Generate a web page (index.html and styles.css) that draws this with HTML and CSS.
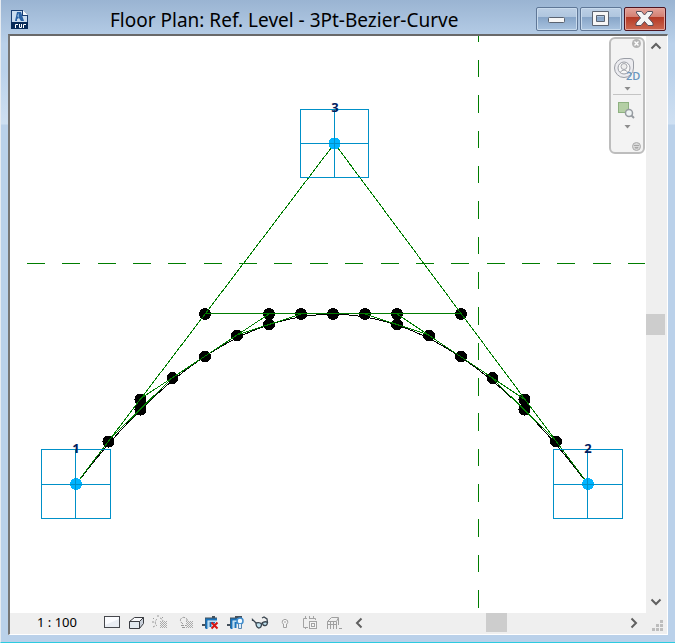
FILE: index.html
```html
<!DOCTYPE html>
<html lang="en">
<head>
<meta charset="utf-8">
<meta name="viewport" content="width=device-width, initial-scale=1">
<title>Floor Plan: Ref. Level - 3Pt-Bezier-Curve</title>
<link rel="stylesheet" href="styles.css">
</head>
<body>
<div class="window">
  <header class="titlebar">
    <svg class="app-icon" width="17" height="19" viewBox="0 0 17 19" aria-hidden="true">
      <path d="M0 0H12L17 5V19H0Z" fill="#173d73"/>
      <path d="M1 1H11V6H16V12H1Z" fill="#c9dcf0"/>
      <path d="M12 0L17 5H12Z" fill="#f5f9fd"/>
      <path d="M4 11L6 2H10L13 11H10L8 8L6 9L6 11Z" fill="#2a62a5"/>
      <path d="M6 6L8 3V8Z" fill="#7da9d6"/>
      <path d="M0 12H17V19H0Z" fill="#062a58"/>
      <path d="M4.500 18V14.500H7M8.500 14V17.500H10.500V14M12.500 18V14.500H15" fill="none" stroke="#fff"/>
    </svg>
    <h1 class="title">Floor Plan: Ref. Level - 3Pt-Bezier-Curve</h1>
    <div class="controls">
      <button class="control" aria-label="Minimize">
        <svg width="40" height="22" viewBox="0 0 40 22"><rect x="11.500" y="9.500" width="16" height="5" rx="1" fill="#f6f6f6" stroke="#5a6371"/></svg>
      </button>
      <button class="control" aria-label="Maximize">
        <svg width="40" height="22" viewBox="0 0 40 22"><path d="M11.500 3.500H27.500V17.500H11.500ZM15.500 7.500V13.500H23.500V7.500Z" fill="#f6f6f6" fill-rule="evenodd" stroke="#5a6371"/></svg>
      </button>
      <button class="control control-close" aria-label="Close">
        <svg width="40" height="22" viewBox="0 0 40 22"><path d="M11.500 3.500H16.500L19.500 7L22.500 3.500H27.500V5L23.500 10L28 15V17.500H23L19.500 13.500L16 17.500H11V15L15.500 10L11.500 5Z" fill="#f4f4f4" stroke="#554e5b" stroke-linejoin="round"/></svg>
      </button>
    </div>
  </header>

  <main class="client">
    <div class="view">
      <svg class="drawing" viewBox="10 36 636 577" role="img" aria-label="Three point Bezier curve construction">
        <g class="curve">
          <path d="M76 484.500Q333 144 588 484.500"/>
        </g>
        <g class="dots">
          <circle cx="108.500" cy="441.500" r="6"/><circle cx="140.500" cy="399.500" r="6"/><circle cx="140.500" cy="409.500" r="6"/>
          <circle cx="172.500" cy="378" r="6"/><circle cx="205" cy="356.500" r="6"/><circle cx="205" cy="314" r="6"/>
          <circle cx="237" cy="335.500" r="6"/><circle cx="269" cy="314" r="6"/><circle cx="269" cy="324.500" r="6"/>
          <circle cx="301" cy="314" r="6"/><circle cx="333" cy="314" r="6"/><circle cx="365" cy="314" r="6"/>
          <circle cx="397" cy="314" r="6"/><circle cx="397" cy="324.500" r="6"/><circle cx="429" cy="335.500" r="6"/>
          <circle cx="461" cy="314" r="6"/><circle cx="461" cy="356.500" r="6"/><circle cx="492.500" cy="378" r="6"/>
          <circle cx="524.500" cy="399.500" r="6"/><circle cx="524.500" cy="409.500" r="6"/><circle cx="556" cy="441.500" r="6"/>
        </g>
        <g class="guides">
          <path d="M76 484L334.500 143.500L588 484M205 313.500H461"/>
          <path d="M140 399L269 314M397 314L524 399"/>
          <path d="M237 335L301 314M365 314L429 335M108 441L172 378M492 378L556 441"/>
        </g>
        <g class="datum">
          <path d="M27 263.500H645" stroke-dasharray="18 17.350"/>
          <path d="M478.500 24.500V609" stroke-dasharray="17.500 17.850"/>
        </g>
        <g class="handles">
          <circle cx="76" cy="484" r="6"/><circle cx="334.500" cy="143.500" r="6"/><circle cx="588" cy="484" r="6"/>
          <path d="M41.500 449.500H110.500V518.500H41.500ZM41.500 484.500H110.500M75.500 449.500V518.500"/>
          <path d="M300.500 109.500H368.500V177.500H300.500ZM300.500 143.500H368.500M334.500 109.500V177.500"/>
          <path d="M553.500 449.500H622.500V518.500H553.500ZM553.500 484.500H622.500M587.500 449.500V518.500"/>
        </g>
        <g class="labels">
          <text x="76" y="453">1</text><text x="335" y="112">3</text><text x="588" y="453">2</text>
        </g>
      </svg>
      <nav class="navbar" aria-label="Navigation">
        <button class="nav-small" aria-label="Close navigation bar">
          <svg width="9" height="9" viewBox="0 0 9 9"><circle cx="4.500" cy="4.500" r="4.500" fill="#b5b5b5"/><path d="M2.500 2.500L6.500 6.500M6.500 2.500L2.500 6.500" stroke="#fff" stroke-width="1.400"/></svg>
        </button>
        <button class="nav-tool" aria-label="Steering wheel 2D">
          <svg width="31" height="30" viewBox="0 0 31 30">
            <path d="M13 4.500H19Q22.500 4.500 22.500 8V14A9.500 9.500 0 1 1 13 4.500Z" fill="#ececf0" stroke="#9a9da5"/>
            <circle cx="13" cy="14" r="6" fill="#f8f8f8" stroke="#9a9da5"/>
            <circle cx="13" cy="12.500" r="3" fill="#eee" stroke="#a5a7ad"/><path d="M9 18.500Q13 13.500 17 18.500" fill="none" stroke="#a5a7ad"/>
            <text class="nav-2d" x="15" y="26">2D</text>
          </svg>
        </button>
        <button class="nav-more" aria-label="Steering wheel options"><svg width="7" height="4" viewBox="0 0 7 4"><path d="M0.500 0H6.500L3.500 3.500Z" fill="#8d8d8d"/></svg></button>
        <button class="nav-tool nav-zoom" aria-label="Zoom region">
          <svg width="31" height="24" viewBox="0 0 31 24">
            <rect x="7.500" y="4.500" width="10" height="10" fill="#b4cfa5" stroke="#8eb181"/>
            <path d="M20 17L23 20" stroke="#969ba0" stroke-width="2"/><circle cx="18" cy="15" r="3.500" fill="#eef3f4" stroke="#969ba0" stroke-width="1.500"/>
          </svg>
        </button>
        <button class="nav-more" aria-label="Zoom options"><svg width="7" height="4" viewBox="0 0 7 4"><path d="M0.500 0H6.500L3.500 3.500Z" fill="#8d8d8d"/></svg></button>
        <button class="nav-small nav-bottom" aria-label="Customize">
          <svg width="9" height="9" viewBox="0 0 9 9"><circle cx="4.500" cy="4.500" r="4" fill="#d9d9d9" stroke="#aaa"/><path d="M2 3.500H7M3 5.500H6L4.500 7Z" fill="#fff" stroke="#999" stroke-width=".8"/></svg>
        </button>
      </nav>
    </div>

    <div class="scroll scroll-y">
      <button class="arrow" aria-label="Scroll up"><svg width="12" height="8" viewBox="0 0 12 8"><path d="M1.500 6.500L6 2L10.500 6.500"/></svg></button>
      <span class="thumb"></span>
      <button class="arrow" aria-label="Scroll down"><svg width="12" height="8" viewBox="0 0 12 8"><path d="M1.500 1.500L6 6L10.500 1.500"/></svg></button>
    </div>

    <footer class="status">
      <button class="scale">1 : 100</button>
      <div class="tools">
        <button class="tool" aria-label="Detail level"><svg width="25" height="20" viewBox="0 0 25 20"><rect x="5.500" y="2.500" width="15" height="11" fill="#e9edf3" stroke="#46484d"/><path d="M6 3H20V5L6 11Z" fill="#fbfcff"/></svg></button>
        <button class="tool" aria-label="Visual style"><svg width="25" height="20" viewBox="0 0 25 20"><g fill="#f8f9fb" stroke="#3b3d42"><path d="M5.500 7.500L10.500 3.500H19.500L15.500 7.500Z"/><path d="M15.500 7.500L19.500 3.500V9.500L15.500 14.500Z" fill="#c9d0da"/><path d="M5.500 7.500H15.500V14.500H5.500Z" fill="#e2e9ef"/></g></svg></button>
        <button class="tool" aria-label="Sun path"><svg width="25" height="20" viewBox="0 0 25 20"><path d="M8 5A4.500 4.500 0 0 0 8 12M11 4A4.500 4.500 0 0 1 14 7M9 1V3M4 4L5 5M3 8H5M4 13L6 12M14 3L13 4" fill="none" stroke="#999" stroke-dasharray="2 1"/><path d="M11 7L18 14M13 7L18 12M11 9L16 14M18 7L11 14M16 7L11 12M18 9L13 14" stroke="#aaa"/></svg></button>
        <button class="tool" aria-label="Shadows"><svg width="25" height="20" viewBox="0 0 25 20"><path d="M9 10Q6 8 6.500 5.500Q9 1.500 13 5L13 7M7 11.500H12M8 13.500H12" fill="none" stroke="#999" stroke-dasharray="3 1"/><path d="M12 7L19 14M14 7L19 12M12 9L17 14M19 7L12 14M17 7L12 12M19 9L14 14" stroke="#aaa"/></svg></button>
        <button class="tool" aria-label="Crop view"><svg width="25" height="20" viewBox="0 0 25 20"><path d="M3 11H6M7 14V4.500H18M13 3H16" fill="none" stroke="#44505b" stroke-width="2"/><path d="M7.500 15V5.500H18M11.500 13V8.500H16" fill="none" stroke="#1874bd" stroke-width="2"/><path d="M9.500 14V7.500H17" fill="none" stroke="#b8def5"/><path d="M12.500 8.500L18.500 14.500M18.500 8.500L12.500 14.500" stroke="#d71414" stroke-width="2"/></svg></button>
        <button class="tool" aria-label="Show crop region"><svg width="25" height="20" viewBox="0 0 25 20"><path d="M3 11H6M7 14V4.500H15M11 3H18" fill="none" stroke="#44505b" stroke-width="2"/><path d="M7.500 15V5.500H14M11.500 14V8.500H14" fill="none" stroke="#1874bd" stroke-width="2"/><path d="M9.500 14V7.500H13" fill="none" stroke="#b8def5"/><circle cx="16" cy="7" r="3" fill="#f2faff" stroke="#3f8ccc" stroke-width="1.500"/><path d="M14.500 10V14.500H17.500V10" fill="#dcefff" stroke="#5887b0"/></svg></button>
        <button class="tool" aria-label="Temporary hide or isolate"><svg width="25" height="20" viewBox="0 0 25 20"><g fill="#bfe1ee" stroke="#3b4650" stroke-width="1.300"><path d="M7 9Q11 8 12.500 10Q12.500 14 9.500 14Q7 13 7 9Z"/><path d="M13.500 8.500Q17 7 18.500 8.500Q18 12 15.500 11.500Q13.500 11.500 13.500 8.500Z"/><path d="M7 9L3.500 5.500V7M12.500 9.500L13.500 9M18.500 8.500L18 5L15 3L13 4" fill="none"/></g></svg></button>
        <button class="tool" aria-label="Reveal hidden elements"><svg width="25" height="20" viewBox="0 0 25 20"><path d="M9.500 10.500Q7.500 8.500 8.500 6.500Q11 4 13.500 6.500Q14.500 8.500 12.500 10.500M9.500 10V13.500H12.500V10M10 8H12" fill="#f5f5f5" stroke="#a0a0a0"/></svg></button>
        <button class="tool" aria-label="Temporary view properties"><svg width="25" height="20" viewBox="0 0 25 20"><g fill="none" stroke="#a3a3a3"><path d="M8 4.500H4.500V13.500H9M10 4.500H16.500V6M6.500 2V4M10.500 2V4M14.500 2V4M6.500 14V15"/><rect x="10.500" y="7.500" width="7" height="7" fill="#f5f5f5"/><rect x="12.500" y="9.500" width="3" height="3"/></g></svg></button>
        <button class="tool" aria-label="Analytical model"><svg width="25" height="20" viewBox="0 0 25 20"><path d="M3.500 15V7.500L7.500 3.500H14.500L12.500 7.500H3.500M6.500 8V15M9.500 8V15M3 10.500H13M12.500 8V15M14.500 4V11M15 14.500H18" fill="none" stroke="#a0a0a0"/></svg></button>
      </div>
      <div class="scroll scroll-x">
        <button class="arrow" aria-label="Scroll left"><svg width="8" height="12" viewBox="0 0 8 12"><path d="M6.500 1.500L2 6L6.500 10.500"/></svg></button>
        <span class="thumb"></span>
        <button class="arrow" aria-label="Scroll right"><svg width="8" height="12" viewBox="0 0 8 12"><path d="M1.500 1.500L6 6L1.500 10.500"/></svg></button>
      </div>
      <svg class="grip" width="21" height="21" viewBox="0 0 21 21" aria-hidden="true"><path d="M14 7h3v3h-3zM10 11h3v3h-3zM14 11h3v3h-3zM6 15h3v3h-3zM10 15h3v3h-3zM14 15h3v3h-3z" fill="#bdbdbd"/></svg>
    </footer>
  </main>
</div>
</body>
</html>
```

FILE: styles.css
```css
* { box-sizing: border-box; }

body { margin: 0; }

button {
  padding: 0;
  border: 0;
  background: none;
  color: inherit;
  font: inherit;
}

svg { display: block; }

.window {
  display: grid;
  grid-template-rows: 34px 1fr;
  min-height: 100vh;
  padding: 0 7px 7px;
  border-left: 1px solid #e6ebf1;
  border-bottom: 1px solid #2ccbe0;
  background: linear-gradient(#9ab4d2, #bad1ea 44px, #bad1ea 70px, #cfe0f2 124px, #bad1ea 125px);
  font-family: "Noto Sans", sans-serif;
}

.titlebar {
  display: flex;
  align-items: flex-start;
  padding: 7px 2px 0 3px;
}

.app-icon {
  flex: none;
  margin-top: 3px;
}

.title {
  flex: 1;
  margin: 0 0 0 82px;
  overflow: hidden;
  color: #000;
  font: 400 19px/26px "Noto Sans", sans-serif;
  white-space: nowrap;
}

.controls {
  display: flex;
  gap: 2px;
}

.control {
  width: 42px;
  height: 24px;
  border: 1px solid #5f7797;
  border-radius: 2px;
  background: linear-gradient(#bdd0e6, #aec5de 42%, #87a5c8 43%, #a9c3df);
  box-shadow: inset 0 0 0 1px #c9dbed;
}

.control-close {
  border-color: #4d1420;
  background: linear-gradient(#e3a299, #d37e70 42%, #b43a26 43%, #cc6750);
  box-shadow: inset 0 0 0 1px #e3a79f;
}

.client {
  display: grid;
  grid-template-columns: 1fr 21px;
  grid-template-rows: 1fr 21px;
  border: 1px solid #fff;
  border-top: 2px solid #696969;
  border-left: 2px solid #777;
  background: #efefef;
}

.view {
  position: relative;
  min-width: 0;
  background: #fff;
}

.drawing {
  width: 100%;
  height: 100%;
  shape-rendering: crispEdges;
}

.curve { fill: none; stroke: #000; }
.guides, .datum { fill: none; stroke: #007d00; }
.handles circle { fill: #00b4ff; }
.handles path { fill: none; stroke: #0090c8; }

.labels {
  fill: #002060;
  font: 700 13px "Noto Sans", sans-serif;
  text-anchor: middle;
}

.navbar {
  position: absolute;
  top: 1px;
  right: 1px;
  display: flex;
  flex-direction: column;
  width: 36px;
  height: 117px;
  border: 2px solid #bdbdbd;
  border-radius: 6px;
  background: #f3f3f3;
}

.nav-small { align-self: flex-end; margin-right: 2px; }
.nav-bottom { margin-top: auto; margin-bottom: 1px; }
.nav-tool { padding-top: 6px; }
.nav-more { display: flex; justify-content: center; padding: 3px 0; }
.nav-zoom {
  margin: 0 2px;
  padding-top: 0;
  border-top: 1px solid #c4c4c4;
}
.nav-zoom svg { margin: 3px -2px 0; }
.nav-2d {
  fill: #6795bd;
  font: 600 11px "Open Sans", sans-serif;
}

.scroll { display: grid; }

.scroll-y { grid-template-rows: 21px 1fr 21px 1fr 21px; }
.scroll-y .thumb { grid-row: 3; width: 19px; }
.scroll-y .arrow { width: 19px; height: 19px; }
.scroll-y .arrow:last-child { grid-row: 5; }

.scroll-x {
  flex: 1;
  grid-template-columns: 20px 1fr 21px 1fr 22px;
}
.scroll-x .thumb { grid-column: 3; height: 19px; }
.scroll-x .arrow { width: 20px; height: 19px; }
.scroll-x .arrow:last-child { grid-column: 5; }

.thumb { background: #cdcdcd; }

.arrow {
  display: grid;
  place-items: center;
}
.arrow path {
  fill: none;
  stroke: #606060;
  stroke-width: 2;
}

.status {
  grid-column: 1 / -1;
  display: flex;
}

.scale {
  width: 89px;
  height: 19px;
  padding-left: 5px;
  color: #000;
  font-size: 13px;
  line-height: 19px;
}

.tools { display: flex; }
.tool { width: 25px; }
.grip { flex: none; }
```
